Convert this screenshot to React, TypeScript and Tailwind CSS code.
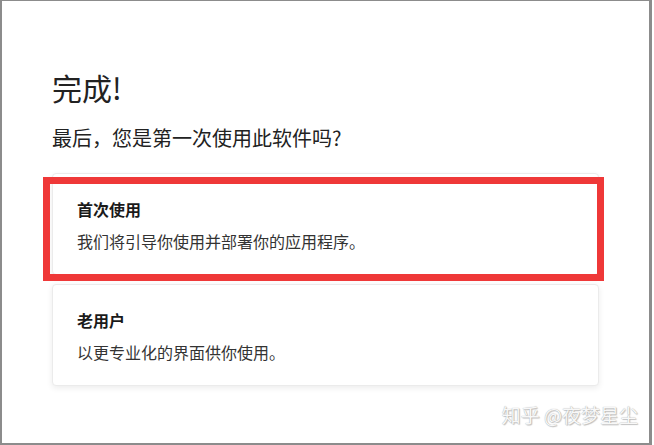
import React from "react"

const options = [
  { title: "首次使用", desc: "我们将引导你使用并部署你的应用程序。", marked: true },
  { title: "老用户", desc: "以更专业化的界面供你使用。", marked: false },
]

export default function App() {
  return (
    <div
      className="relative h-[445px] w-[654px] overflow-hidden bg-white"
      style={{ fontFamily: '"Noto Sans CJK SC", "Noto Sans", sans-serif' }}
    >
      <div className="h-[445px] w-[652px] border-b-2 border-l-2 border-r-[3px] border-t border-[#8c8c8c] bg-white px-[50px] pt-[68px]">
        <h1 className="text-[30px] leading-[36px] font-normal text-[#222]">完成!</h1>
        <p className="mt-[19px] text-[20px] leading-[28px] text-[#222]">最后，您是第一次使用此软件吗?</p>

        <div className="mt-[21px] flex flex-col gap-[9px]">
          {options.map((o) => (
            <div
              key={o.title}
              className="relative rounded border border-[#ebebeb] bg-white px-6 pt-[23px] pb-[21px] shadow-[0_2px_6px_rgba(0,0,0,0.08)]"
            >
              <div className="text-[16px] leading-6 font-bold text-[#1a1a1a]">{o.title}</div>
              <div className="mt-2 text-[16px] leading-6 text-[#333]">{o.desc}</div>
              {o.marked && (
                <div className="pointer-events-none absolute -left-[10px] -right-[6px] top-[3px] -bottom-[7px] border-[7px] border-[#ef3838]" />
              )}
            </div>
          ))}
        </div>
      </div>

      <div className="absolute right-[16px] top-[405px] text-[19px] leading-none text-[#f8f8f8] [text-shadow:0_0_1px_#9a9a9a,1px_1px_1px_#c4c4c4]">
        知乎 @夜梦星尘
      </div>
    </div>
  )
}
